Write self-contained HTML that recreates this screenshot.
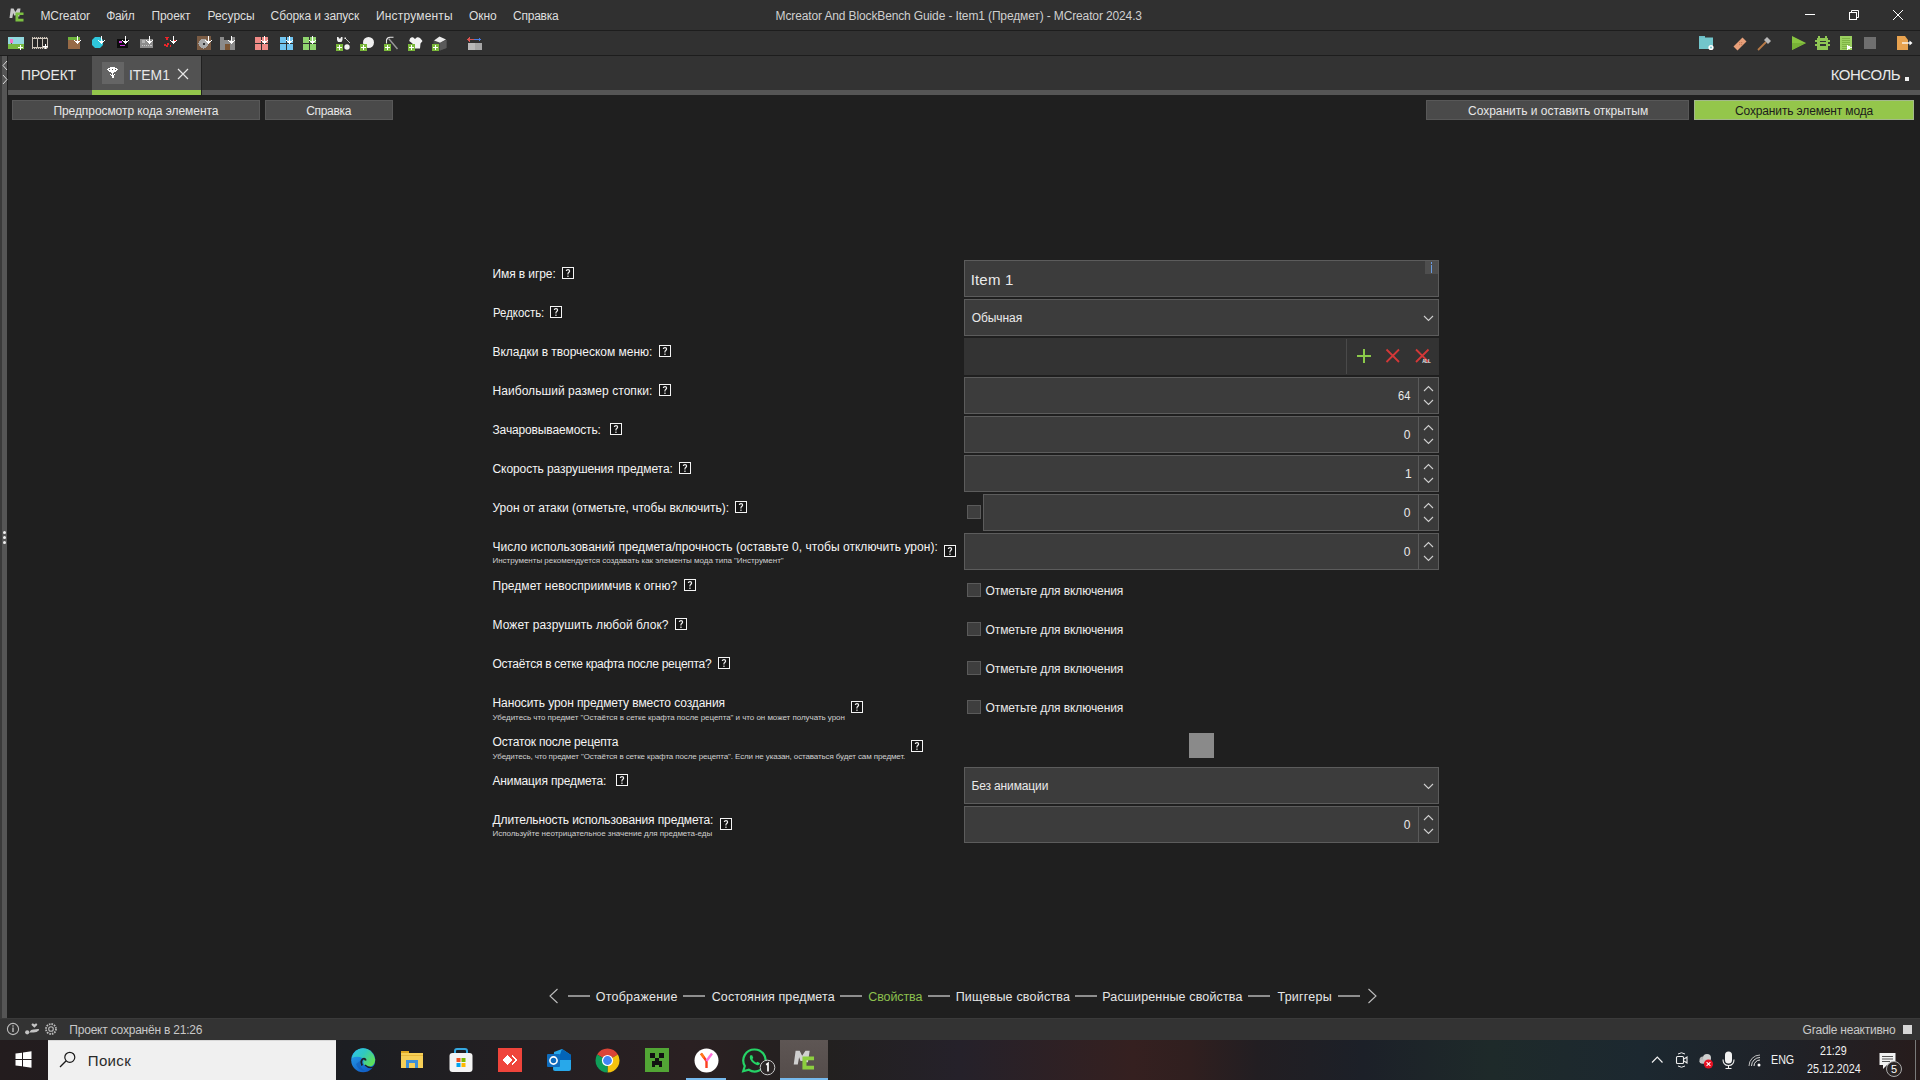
<!DOCTYPE html>
<html><head><meta charset="utf-8">
<style>
*{margin:0;padding:0;box-sizing:border-box}
html,body{width:1920px;height:1080px;overflow:hidden;background:#1f1f1f;font-family:"Liberation Sans",sans-serif}
.a{position:absolute}
.t{position:absolute;white-space:pre;font-family:"Liberation Sans",sans-serif}
.inp{position:absolute;left:964px;width:475px;height:37px;background:#3c3c3c;border:1px solid #5c5c5c}
.spb{position:absolute;left:1418px;width:21px;height:37px;border:1px solid #5c5c5c;border-left:1px solid #5a5a5a;background:#3a3a3a}
.help{position:absolute;width:12px;height:12px;border:1px solid #f2f2f2;background:#1a1a1a}
.help:after{content:"";position:absolute}
.cb{position:absolute;left:967px;width:14px;height:14px;background:#3e3e3e;border:1px solid #5a5a5a}
.btn{position:absolute;top:100px;height:20px;background:#4a4a4a;border:1px solid #585858}
svg{position:absolute;overflow:visible}
</style></head><body>
<!-- title bar -->
<div class="a" style="left:0;top:0;width:1920px;height:30px;background:#303030"></div>
<div class="a" style="left:0;top:30px;width:1920px;height:1px;background:#1d1d1d"></div>
<!-- toolbar -->
<div class="a" style="left:0;top:31px;width:1920px;height:24px;background:#313131"></div>
<div class="a" style="left:0;top:55px;width:1920px;height:1px;background:#1d1d1d"></div>
<!-- tab row -->
<div class="a" style="left:0;top:56px;width:1920px;height:34px;background:#333333"></div>
<div class="a" style="left:8px;top:90px;width:1912px;height:5px;background:#555555"></div>
<div class="a" style="left:92px;top:56px;width:109px;height:34px;background:#525252"></div>
<div class="a" style="left:92px;top:90px;width:109px;height:5px;background:#93c54b"></div>
<div class="a" style="left:102px;top:62px;width:22px;height:22px;background:#656565"></div>
<div class="a" style="left:201px;top:56px;width:1px;height:39px;background:#202020"></div>
<!-- left strip -->
<div class="a" style="left:0;top:56px;width:2px;height:962px;background:#3a3a3a"></div>
<div class="a" style="left:2px;top:56px;width:5px;height:962px;background:#555555"></div>
<div class="a" style="left:7px;top:56px;width:1px;height:962px;background:#1f1f1f"></div>
<!-- status bar -->
<div class="a" style="left:0;top:1018px;width:1920px;height:22px;background:#333333;border-top:1px solid #3a3a3a"></div>
<!-- taskbar -->
<div class="a" style="left:0;top:1040px;width:1920px;height:40px;background:linear-gradient(90deg,#231c1e 0%,#1f1c20 15%,#1c1e22 18%,#2a2022 36%,#22201f 43%,#25212a 50%,#352020 59%,#301f1f 62%,#221e22 65.5%,#1c2028 71%,#1e2a2a 77.7%,#1c2830 85.5%,#1f2228 92.7%,#271c1c 100%)"></div>
<div class="a" style="left:48px;top:1040px;width:288px;height:40px;background:#f0f0f0;border-top:1px solid #d8d8d8"></div>
<div class="a" style="left:780px;top:1040px;width:48px;height:40px;background:linear-gradient(180deg,#5e5654,#544c4a)"></div>
<div class="a" style="left:686px;top:1078px;width:40px;height:2px;background:#76b9ed"></div>
<div class="a" style="left:780px;top:1078px;width:48px;height:2px;background:#76b9ed"></div>
<div class="a" style="left:1915px;top:1040px;width:1px;height:40px;background:#7a7a7a"></div>

<!-- buttons -->
<div class="btn" style="left:12px;width:248px"></div>
<div class="btn" style="left:265px;width:128px"></div>
<div class="btn" style="left:1426px;width:263px"></div>
<div class="btn" style="left:1694px;width:220px;background:#94c64b;border-color:#a3b98a"></div>

<!-- form boxes -->
<div class="inp" style="top:260px"></div>
<div class="a" style="left:1425px;top:261px;width:13px;height:13px;background:#4e4e4e"></div>
<div class="a" style="left:1431px;top:262px;width:1px;height:2px;background:#6a9ce0"></div><div class="a" style="left:1431px;top:265px;width:1px;height:8px;background:#6a9ce0"></div>
<div class="inp" style="top:299px"></div>
<div class="a" style="left:964px;top:338px;width:475px;height:37px;background:#333333"></div>
<div class="a" style="left:1346px;top:339px;width:1px;height:35px;background:#4a4a4a"></div>
<div class="inp" style="top:377px;width:455px"></div><div class="spb" style="top:377px"></div>
<div class="inp" style="top:416px;width:455px"></div><div class="spb" style="top:416px"></div>
<div class="inp" style="top:455px;width:455px"></div><div class="spb" style="top:455px"></div>
<div class="cb" style="top:505px"></div>
<div class="inp" style="top:494px;left:983px;width:436px"></div><div class="spb" style="top:494px"></div>
<div class="inp" style="top:533px;width:455px"></div><div class="spb" style="top:533px"></div>
<div class="cb" style="top:583px"></div>
<div class="cb" style="top:622px"></div>
<div class="cb" style="top:661px"></div>
<div class="cb" style="top:700px"></div>
<div class="a" style="left:1189px;top:733px;width:25px;height:25px;background:#8a8a8a"></div>
<div class="inp" style="top:767px"></div>
<div class="inp" style="top:806px;width:455px"></div><div class="spb" style="top:806px"></div>

<svg style="left:9px;top:8px" width="16" height="15" viewBox="0 0 16 15" ><g transform="scale(1.0)"><path d="M0.5 10 L1.8 0.5 L4.6 0.5 L6.3 4 L8.6 0.5 L11.5 0.5 L10.3 8.5 L7.8 8.5 L8.3 5 L6.6 7.5 L5.2 7.5 L4.2 5 L3.3 10 Z" fill="#c9c9c9"/><path d="M6.5 4.5 L14.5 4.5 L14.5 7 L9.3 7 L9.3 10.8 L14.5 10.8 L14.5 13.5 L6.5 13.5 Z" fill="#7cc142"/></g></svg>
<svg style="left:8px;top:37px" width="17" height="14" viewBox="0 0 17 14" shape-rendering="crispEdges"><rect x="0" y="0" width="16" height="7" fill="#92d8de"/><rect x="0" y="7" width="16" height="5" fill="#76b83e"/><rect x="2" y="2" width="3" height="4" fill="#f07ac8"/><rect x="3" y="6" width="1" height="1" fill="#6a4a3a"/><rect x="10" y="10" width="5" height="1" fill="#fff"/><rect x="12" y="8" width="1" height="5" fill="#fff"/></svg>
<svg style="left:32px;top:37px" width="17" height="14" viewBox="0 0 17 14" shape-rendering="crispEdges"><rect x="0" y="0" width="16" height="12" fill="#cbc3b8"/><rect x="1" y="2" width="4" height="8" fill="#262626"/><rect x="6" y="2" width="4" height="8" fill="#262626"/><rect x="11" y="2" width="4" height="8" fill="#262626"/><rect x="1" y="0" width="1" height="1" fill="#444"/><rect x="1" y="11" width="1" height="1" fill="#444"/><rect x="3" y="0" width="1" height="1" fill="#444"/><rect x="3" y="11" width="1" height="1" fill="#444"/><rect x="5" y="0" width="1" height="1" fill="#444"/><rect x="5" y="11" width="1" height="1" fill="#444"/><rect x="7" y="0" width="1" height="1" fill="#444"/><rect x="7" y="11" width="1" height="1" fill="#444"/><rect x="9" y="0" width="1" height="1" fill="#444"/><rect x="9" y="11" width="1" height="1" fill="#444"/><rect x="11" y="0" width="1" height="1" fill="#444"/><rect x="11" y="11" width="1" height="1" fill="#444"/><rect x="13" y="0" width="1" height="1" fill="#444"/><rect x="13" y="11" width="1" height="1" fill="#444"/><rect x="15" y="0" width="1" height="1" fill="#444"/><rect x="15" y="11" width="1" height="1" fill="#444"/><rect x="11" y="9" width="5" height="1" fill="#fff"/><rect x="13" y="7" width="1" height="5" fill="#fff"/></svg>
<svg style="left:68px;top:36px" width="13" height="14" viewBox="0 0 13 14" shape-rendering="crispEdges"><rect x="0" y="1" width="12" height="3" fill="#6db33c"/><rect x="0" y="4" width="12" height="9" fill="#976a46"/><g shape-rendering="crispEdges"><rect x="9" y="0" width="1" height="6" fill="#fff"/><rect x="7" y="5" width="5" height="1" fill="#fff"/><rect x="8" y="6" width="3" height="1" fill="#fff"/><rect x="9" y="7" width="1" height="1" fill="#fff"/><rect x="6" y="4" width="1" height="1" fill="#fff"/><rect x="12" y="4" width="1" height="1" fill="#fff"/></g></svg>
<svg style="left:92px;top:36px" width="13" height="14" viewBox="0 0 13 14" ><path d="M3 1 L8 1 L11 4 L11 9 L8 12 L3 12 L0 9 L0 4 Z" fill="#2fc7dc"/><g shape-rendering="crispEdges"><rect x="9" y="0" width="1" height="6" fill="#fff"/><rect x="7" y="5" width="5" height="1" fill="#fff"/><rect x="8" y="6" width="3" height="1" fill="#fff"/><rect x="9" y="7" width="1" height="1" fill="#fff"/><rect x="6" y="4" width="1" height="1" fill="#fff"/><rect x="12" y="4" width="1" height="1" fill="#fff"/></g></svg>
<svg style="left:117px;top:36px" width="12" height="14" viewBox="0 0 12 14" shape-rendering="crispEdges"><rect x="0" y="2.5" width="10.5" height="9" fill="#0d0d0d"/><rect x="2" y="5" width="3" height="1.5" fill="#c93ad8"/><rect x="3" y="8.5" width="5" height="1.5" fill="#c93ad8"/><g shape-rendering="crispEdges"><rect x="8" y="0" width="1" height="6" fill="#fff"/><rect x="6" y="5" width="5" height="1" fill="#fff"/><rect x="7" y="6" width="3" height="1" fill="#fff"/><rect x="8" y="7" width="1" height="1" fill="#fff"/><rect x="5" y="4" width="1" height="1" fill="#fff"/><rect x="11" y="4" width="1" height="1" fill="#fff"/></g></svg>
<svg style="left:140px;top:36px" width="13" height="14" viewBox="0 0 13 14" shape-rendering="crispEdges"><rect x="0" y="2.5" width="12.5" height="9.5" fill="#8c8c8c"/><rect x="2" y="4" width="3" height="3" fill="#b5b5b5"/><rect x="1.5" y="8.5" width="1.2" height="1.2" fill="#c8c8c8"/><rect x="3.7" y="8.5" width="1.2" height="1.2" fill="#c8c8c8"/><rect x="5.9" y="8.5" width="1.2" height="1.2" fill="#c8c8c8"/><rect x="8.100000000000001" y="8.5" width="1.2" height="1.2" fill="#c8c8c8"/><rect x="10.3" y="8.5" width="1.2" height="1.2" fill="#c8c8c8"/><g shape-rendering="crispEdges"><rect x="9" y="0" width="1" height="6" fill="#fff"/><rect x="7" y="5" width="5" height="1" fill="#fff"/><rect x="8" y="6" width="3" height="1" fill="#fff"/><rect x="9" y="7" width="1" height="1" fill="#fff"/><rect x="6" y="4" width="1" height="1" fill="#fff"/><rect x="12" y="4" width="1" height="1" fill="#fff"/></g></svg>
<svg style="left:163px;top:36px" width="15" height="14" viewBox="0 0 15 14" shape-rendering="crispEdges"><rect x="3" y="2" width="1.5" height="1.5" fill="#e8262a"/><rect x="2" y="1" width="3.5" height="0.5" fill="#e8262a"/><rect x="1" y="8" width="2" height="2" fill="#e8262a"/><rect x="3" y="9" width="2" height="2" fill="#e8262a"/><rect x="4" y="7" width="1.5" height="1.5" fill="#e8262a"/><rect x="6.5" y="9" width="1.5" height="1.5" fill="#e8262a"/><rect x="11" y="4" width="2" height="2" fill="#e8262a"/><g shape-rendering="crispEdges"><rect x="10" y="0" width="1" height="6" fill="#fff"/><rect x="8" y="5" width="5" height="1" fill="#fff"/><rect x="9" y="6" width="3" height="1" fill="#fff"/><rect x="10" y="7" width="1" height="1" fill="#fff"/><rect x="7" y="4" width="1" height="1" fill="#fff"/><rect x="13" y="4" width="1" height="1" fill="#fff"/></g></svg>
<svg style="left:197px;top:36px" width="15" height="15" viewBox="0 0 15 15" shape-rendering="crispEdges"><rect x="0" y="0" width="14" height="14" fill="#7a5b43"/><circle cx="6.5" cy="7.5" r="5" fill="#a9a9a9"/><rect x="6" y="7" width="1.5" height="1.5" fill="#333"/><g shape-rendering="crispEdges"><rect x="11" y="0" width="1" height="6" fill="#fff"/><rect x="9" y="5" width="5" height="1" fill="#fff"/><rect x="10" y="6" width="3" height="1" fill="#fff"/><rect x="11" y="7" width="1" height="1" fill="#fff"/><rect x="8" y="4" width="1" height="1" fill="#fff"/><rect x="14" y="4" width="1" height="1" fill="#fff"/></g></svg>
<svg style="left:220px;top:36px" width="16" height="15" viewBox="0 0 16 15" shape-rendering="crispEdges"><rect x="0" y="0.5" width="3.5" height="13.5" fill="#8a8a8a"/><rect x="11" y="0.5" width="3.5" height="13.5" fill="#8a8a8a"/><rect x="3.5" y="4" width="7.5" height="10" fill="#8a8a8a"/><rect x="5" y="8" width="4.5" height="6" fill="#7a5534"/><g shape-rendering="crispEdges"><rect x="11" y="0" width="1" height="6" fill="#fff"/><rect x="9" y="5" width="5" height="1" fill="#fff"/><rect x="10" y="6" width="3" height="1" fill="#fff"/><rect x="11" y="7" width="1" height="1" fill="#fff"/><rect x="8" y="4" width="1" height="1" fill="#fff"/><rect x="14" y="4" width="1" height="1" fill="#fff"/></g></svg>
<svg style="left:255px;top:37px" width="15" height="14" viewBox="0 0 15 14" shape-rendering="crispEdges"><rect x="0" y="0" width="6" height="6" fill="#f08a86"/><rect x="7" y="0" width="6" height="6" fill="#f08a86"/><rect x="0" y="7" width="6" height="6" fill="#f08a86"/><rect x="7" y="7" width="6" height="6" fill="#f08a86"/><g shape-rendering="crispEdges"><rect x="9" y="-1" width="1" height="6" fill="#fff"/><rect x="7" y="4" width="5" height="1" fill="#fff"/><rect x="8" y="5" width="3" height="1" fill="#fff"/><rect x="9" y="6" width="1" height="1" fill="#fff"/><rect x="6" y="3" width="1" height="1" fill="#fff"/><rect x="12" y="3" width="1" height="1" fill="#fff"/></g></svg>
<svg style="left:280px;top:37px" width="15" height="14" viewBox="0 0 15 14" shape-rendering="crispEdges"><rect x="0" y="0" width="6" height="6" fill="#72c6f2"/><rect x="7" y="0" width="6" height="6" fill="#72c6f2"/><rect x="0" y="7" width="6" height="6" fill="#72c6f2"/><rect x="7" y="7" width="6" height="6" fill="#72c6f2"/><g shape-rendering="crispEdges"><rect x="9" y="-1" width="1" height="6" fill="#fff"/><rect x="7" y="4" width="5" height="1" fill="#fff"/><rect x="8" y="5" width="3" height="1" fill="#fff"/><rect x="9" y="6" width="1" height="1" fill="#fff"/><rect x="6" y="3" width="1" height="1" fill="#fff"/><rect x="12" y="3" width="1" height="1" fill="#fff"/></g></svg>
<svg style="left:303px;top:37px" width="15" height="14" viewBox="0 0 15 14" shape-rendering="crispEdges"><rect x="0" y="0" width="6" height="6" fill="#8fd46e"/><rect x="7" y="0" width="6" height="6" fill="#8fd46e"/><rect x="0" y="7" width="6" height="6" fill="#8fd46e"/><rect x="7" y="7" width="6" height="6" fill="#8fd46e"/><g shape-rendering="crispEdges"><rect x="9" y="-1" width="1" height="6" fill="#fff"/><rect x="7" y="4" width="5" height="1" fill="#fff"/><rect x="8" y="5" width="3" height="1" fill="#fff"/><rect x="9" y="6" width="1" height="1" fill="#fff"/><rect x="6" y="3" width="1" height="1" fill="#fff"/><rect x="12" y="3" width="1" height="1" fill="#fff"/></g></svg>
<svg style="left:336px;top:36px" width="15" height="15" viewBox="0 0 15 15" ><path d="M1 1 L2.5 1 L3 2.5 L4.5 2.5 L5 1 L6.5 1 L6.5 4 L5.5 6 L2 6 L1 4 Z" fill="#eee"/><path d="M9 2 L14 7" stroke="#bbb" stroke-width="1"/><rect x="8.5" y="1.5" width="1.5" height="1.5" fill="#eee"/><circle cx="11" cy="11" r="2.7" fill="#f2f2f2"/><g shape-rendering="crispEdges"><rect x="0" y="8" width="7" height="7" fill="#7ab83a"/><rect x="1" y="11" width="5" height="1" fill="#fff"/><rect x="3" y="9" width="1" height="5" fill="#fff"/></g></svg>
<svg style="left:360px;top:36px" width="15" height="15" viewBox="0 0 15 15" ><circle cx="8.5" cy="6.5" r="5.5" fill="#f0f0f0"/><g shape-rendering="crispEdges"><rect x="0" y="8" width="7" height="7" fill="#7ab83a"/><rect x="1" y="11" width="5" height="1" fill="#fff"/><rect x="3" y="9" width="1" height="5" fill="#fff"/></g></svg>
<svg style="left:384px;top:36px" width="16" height="15" viewBox="0 0 16 15" ><path d="M2.5 7.5 L2.5 4 Q3.2 1.3 6 1.2 L9.5 1.2" stroke="#e8e8e8" stroke-width="1.1" fill="none"/><path d="M4.8 2.8 L13.5 13" stroke="#9a9a9a" stroke-width="1.4"/><g shape-rendering="crispEdges"><rect x="0" y="8" width="7" height="7" fill="#7ab83a"/><rect x="1" y="11" width="5" height="1" fill="#fff"/><rect x="3" y="9" width="1" height="5" fill="#fff"/></g></svg>
<svg style="left:407px;top:36px" width="17" height="15" viewBox="0 0 17 15" ><path d="M3 2.5 Q4 1 6 1.2 L8 3 L10 1.2 Q12 1 13.5 2.5 L15.5 5 L13.5 7.5 L13 12.5 L6 12.5 L5.5 7.5 L2.2 5 Z" fill="#f2f2f2"/><g shape-rendering="crispEdges"><rect x="1" y="8" width="7" height="7" fill="#7ab83a"/><rect x="2" y="11" width="5" height="1" fill="#fff"/><rect x="4" y="9" width="1" height="5" fill="#fff"/></g></svg>
<svg style="left:432px;top:36px" width="16" height="15" viewBox="0 0 16 15" ><path d="M1.5 4.5 L8 7 L14.5 4 L14.5 12 L8 14.5 L1.5 11.5 Z" fill="#4a4a4a"/><path d="M8 7 L14.5 4 L14.5 12 L8 14.5 Z" fill="#5a5a5a"/><path d="M2 4.5 L7.5 0.5 L14 3.5 L8 6.8 Z" fill="#ececec"/><g shape-rendering="crispEdges"><rect x="0" y="8" width="7" height="7" fill="#7ab83a"/><rect x="1" y="11" width="5" height="1" fill="#fff"/><rect x="3" y="9" width="1" height="5" fill="#fff"/></g></svg>
<svg style="left:467px;top:36px" width="15" height="15" viewBox="0 0 15 15" shape-rendering="crispEdges"><path d="M1 3.5 L7 3.5" stroke="#d9534f" stroke-width="1.4"/><path d="M0 3.5 L3 1 L3 6 Z" fill="#d9534f"/><path d="M7 3.5 L13 3.5" stroke="#4a7ce0" stroke-width="1.4"/><path d="M14.5 3.5 L11.5 1 L11.5 6 Z" fill="#4a7ce0"/><rect x="0.5" y="7" width="14" height="7" fill="#b9b9b9"/><rect x="7.5" y="7" width="7" height="7" fill="#a6a6a6"/></svg>
<svg style="left:1699px;top:36px" width="17" height="15" viewBox="0 0 17 15" ><rect x="0" y="0" width="6" height="2" fill="#6cbcc4"/><rect x="0" y="1.5" width="14" height="11.5" fill="#72c6cc"/><circle cx="12" cy="11.5" r="2.6" fill="#fff"/><circle cx="12" cy="11.5" r="1" fill="#72c6cc"/></svg>
<svg style="left:1733px;top:36px" width="15" height="15" viewBox="0 0 15 15" ><path d="M0.5 10.5 L9.5 1.5 L13.5 5.5 L4.5 14.5 Z" fill="#e8a07a"/><rect x="6" y="6" width="1.2" height="1.2" fill="#c87d5a"/><rect x="8" y="6" width="1.2" height="1.2" fill="#c87d5a"/><rect x="6" y="8" width="1.2" height="1.2" fill="#c87d5a"/><rect x="8" y="8" width="1.2" height="1.2" fill="#c87d5a"/></svg>
<svg style="left:1757px;top:36px" width="15" height="15" viewBox="0 0 15 15" ><path d="M1 14 L9 6" stroke="#b87a48" stroke-width="1.8"/><path d="M7 4 L10 1 L14 5 L11 8 Z" fill="#b9b9b9"/></svg>
<svg style="left:1792px;top:36px" width="15" height="15" viewBox="0 0 15 15" ><path d="M0 0 L14 7 L0 14 Z" fill="#88c441"/><path d="M0 7 L14 7 L0 14 Z" fill="#78b236"/></svg>
<svg style="left:1815px;top:36px" width="15" height="15" viewBox="0 0 15 15" shape-rendering="crispEdges"><rect x="3" y="0" width="1.5" height="2" fill="#8fc654"/><rect x="10" y="0" width="1.5" height="2" fill="#8fc654"/><rect x="2" y="1.5" width="11" height="12" fill="#8fc654"/><rect x="0" y="4" width="15" height="1.5" fill="#8fc654"/><rect x="0" y="8" width="15" height="1.5" fill="#8fc654"/><rect x="4.5" y="4.5" width="6" height="1.5" fill="#333"/><rect x="4.5" y="8.2" width="6" height="1.5" fill="#333"/></svg>
<svg style="left:1840px;top:36px" width="14" height="15" viewBox="0 0 14 15" shape-rendering="crispEdges"><rect x="0" y="0" width="11.5" height="14" fill="#9bd060"/><rect x="1.5" y="2" width="8" height="0.8" fill="#7fb446"/><rect x="1.5" y="4" width="8" height="0.8" fill="#7fb446"/><rect x="1.5" y="6" width="8" height="0.8" fill="#7fb446"/><rect x="1.5" y="8" width="8" height="0.8" fill="#7fb446"/><rect x="1.5" y="10" width="8" height="0.8" fill="#7fb446"/><rect x="1.5" y="12" width="8" height="0.8" fill="#7fb446"/><path d="M7 9 L12 11.5 L7 14 Z" fill="#fff"/></svg>
<svg style="left:1864px;top:37px" width="13" height="13" viewBox="0 0 13 13" shape-rendering="crispEdges"><rect x="0" y="0" width="12" height="12" fill="#6f6f6f"/></svg>
<svg style="left:1897px;top:36px" width="17" height="15" viewBox="0 0 17 15" ><path d="M0 0 L8 0 L11 4 L11 14 L0 14 Z" fill="#e8a24f"/><path d="M5 7 L14 7" stroke="#fff" stroke-width="1.3"/><path d="M15.5 7 L12.5 4.5 L12.5 9.5 Z" fill="#fff"/></svg>
<svg style="left:1804px;top:9px" width="100" height="13" viewBox="0 0 100 13" ><rect x="1" y="5" width="10" height="1" fill="#fff"/><rect x="45.5" y="3.5" width="7" height="7" fill="none" stroke="#fff" stroke-width="1"/><path d="M47.5 3.5 L47.5 1.5 L54.5 1.5 L54.5 8.5 L52.5 8.5" stroke="#fff" stroke-width="1" fill="none"/><path d="M89 1 L99 11 M99 1 L89 11" stroke="#fff" stroke-width="1"/></svg>
<svg style="left:2px;top:60px" width="6" height="26" viewBox="0 0 6 26" ><path d="M5 1 L1 5.5 L5 10" stroke="#dcdcdc" stroke-width="1" fill="none"/><path d="M1 15 L5 19.5 L1 24" stroke="#dcdcdc" stroke-width="1" fill="none"/></svg>
<svg style="left:2px;top:530px" width="6" height="15" viewBox="0 0 6 15" ><circle cx="2.5" cy="2.4" r="1.5" fill="#eee"/><circle cx="2.5" cy="7.4" r="1.5" fill="#eee"/><circle cx="2.5" cy="12.4" r="1.5" fill="#eee"/></svg>
<svg style="left:106px;top:66px" width="14" height="13" viewBox="0 0 14 13" shape-rendering="crispEdges"><rect x="4" y="1" width="5" height="1" fill="#fff"/><rect x="2" y="2" width="9" height="1" fill="#fff"/><rect x="1" y="3" width="11" height="1" fill="#fff"/><rect x="2" y="4" width="9" height="1" fill="#fff"/><rect x="3" y="5" width="7" height="1" fill="#fff"/><rect x="5" y="6" width="3" height="1" fill="#fff"/><rect x="6" y="6.5" width="1" height="2.5" fill="#fff"/><rect x="4" y="8" width="1" height="1" fill="#fff"/><rect x="8" y="8" width="1" height="1" fill="#fff"/><rect x="5" y="9" width="3" height="1" fill="#fff"/><rect x="6" y="10" width="1.5" height="2" fill="#fff"/><rect x="3" y="3" width="1" height="1" fill="#555"/><rect x="6" y="3" width="1" height="1" fill="#555"/><rect x="9" y="3" width="1" height="1" fill="#555"/></svg>
<svg style="left:177px;top:68px" width="12" height="12" viewBox="0 0 12 12" ><path d="M1 1 L11 11 M11 1 L1 11" stroke="#e6e6e6" stroke-width="1.2"/></svg>
<svg style="left:1905px;top:77px" width="5" height="5" viewBox="0 0 5 5" shape-rendering="crispEdges"><rect x="0" y="0" width="4" height="4" fill="#f0f0f0"/></svg>
<svg style="left:562px;top:267px" width="12" height="12" viewBox="0 0 12 12" ><rect x="0.5" y="0.5" width="11" height="11" fill="#141414" stroke="#f4f4f4" stroke-width="1"/><path d="M4.3 4 Q4.5 2.6 6 2.6 Q7.6 2.6 7.6 4 Q7.6 5 6.6 5.6 Q5.9 6.1 5.9 7.6" stroke="#f0f0f0" stroke-width="1.2" fill="none"/><rect x="5.3" y="8.6" width="1.3" height="1.3" fill="#f0f0f0"/></svg>
<svg style="left:550px;top:306px" width="12" height="12" viewBox="0 0 12 12" ><rect x="0.5" y="0.5" width="11" height="11" fill="#141414" stroke="#f4f4f4" stroke-width="1"/><path d="M4.3 4 Q4.5 2.6 6 2.6 Q7.6 2.6 7.6 4 Q7.6 5 6.6 5.6 Q5.9 6.1 5.9 7.6" stroke="#f0f0f0" stroke-width="1.2" fill="none"/><rect x="5.3" y="8.6" width="1.3" height="1.3" fill="#f0f0f0"/></svg>
<svg style="left:659px;top:345px" width="12" height="12" viewBox="0 0 12 12" ><rect x="0.5" y="0.5" width="11" height="11" fill="#141414" stroke="#f4f4f4" stroke-width="1"/><path d="M4.3 4 Q4.5 2.6 6 2.6 Q7.6 2.6 7.6 4 Q7.6 5 6.6 5.6 Q5.9 6.1 5.9 7.6" stroke="#f0f0f0" stroke-width="1.2" fill="none"/><rect x="5.3" y="8.6" width="1.3" height="1.3" fill="#f0f0f0"/></svg>
<svg style="left:659px;top:384px" width="12" height="12" viewBox="0 0 12 12" ><rect x="0.5" y="0.5" width="11" height="11" fill="#141414" stroke="#f4f4f4" stroke-width="1"/><path d="M4.3 4 Q4.5 2.6 6 2.6 Q7.6 2.6 7.6 4 Q7.6 5 6.6 5.6 Q5.9 6.1 5.9 7.6" stroke="#f0f0f0" stroke-width="1.2" fill="none"/><rect x="5.3" y="8.6" width="1.3" height="1.3" fill="#f0f0f0"/></svg>
<svg style="left:610px;top:423px" width="12" height="12" viewBox="0 0 12 12" ><rect x="0.5" y="0.5" width="11" height="11" fill="#141414" stroke="#f4f4f4" stroke-width="1"/><path d="M4.3 4 Q4.5 2.6 6 2.6 Q7.6 2.6 7.6 4 Q7.6 5 6.6 5.6 Q5.9 6.1 5.9 7.6" stroke="#f0f0f0" stroke-width="1.2" fill="none"/><rect x="5.3" y="8.6" width="1.3" height="1.3" fill="#f0f0f0"/></svg>
<svg style="left:679px;top:462px" width="12" height="12" viewBox="0 0 12 12" ><rect x="0.5" y="0.5" width="11" height="11" fill="#141414" stroke="#f4f4f4" stroke-width="1"/><path d="M4.3 4 Q4.5 2.6 6 2.6 Q7.6 2.6 7.6 4 Q7.6 5 6.6 5.6 Q5.9 6.1 5.9 7.6" stroke="#f0f0f0" stroke-width="1.2" fill="none"/><rect x="5.3" y="8.6" width="1.3" height="1.3" fill="#f0f0f0"/></svg>
<svg style="left:735px;top:501px" width="12" height="12" viewBox="0 0 12 12" ><rect x="0.5" y="0.5" width="11" height="11" fill="#141414" stroke="#f4f4f4" stroke-width="1"/><path d="M4.3 4 Q4.5 2.6 6 2.6 Q7.6 2.6 7.6 4 Q7.6 5 6.6 5.6 Q5.9 6.1 5.9 7.6" stroke="#f0f0f0" stroke-width="1.2" fill="none"/><rect x="5.3" y="8.6" width="1.3" height="1.3" fill="#f0f0f0"/></svg>
<svg style="left:944px;top:545px" width="12" height="12" viewBox="0 0 12 12" ><rect x="0.5" y="0.5" width="11" height="11" fill="#141414" stroke="#f4f4f4" stroke-width="1"/><path d="M4.3 4 Q4.5 2.6 6 2.6 Q7.6 2.6 7.6 4 Q7.6 5 6.6 5.6 Q5.9 6.1 5.9 7.6" stroke="#f0f0f0" stroke-width="1.2" fill="none"/><rect x="5.3" y="8.6" width="1.3" height="1.3" fill="#f0f0f0"/></svg>
<svg style="left:684px;top:579px" width="12" height="12" viewBox="0 0 12 12" ><rect x="0.5" y="0.5" width="11" height="11" fill="#141414" stroke="#f4f4f4" stroke-width="1"/><path d="M4.3 4 Q4.5 2.6 6 2.6 Q7.6 2.6 7.6 4 Q7.6 5 6.6 5.6 Q5.9 6.1 5.9 7.6" stroke="#f0f0f0" stroke-width="1.2" fill="none"/><rect x="5.3" y="8.6" width="1.3" height="1.3" fill="#f0f0f0"/></svg>
<svg style="left:675px;top:618px" width="12" height="12" viewBox="0 0 12 12" ><rect x="0.5" y="0.5" width="11" height="11" fill="#141414" stroke="#f4f4f4" stroke-width="1"/><path d="M4.3 4 Q4.5 2.6 6 2.6 Q7.6 2.6 7.6 4 Q7.6 5 6.6 5.6 Q5.9 6.1 5.9 7.6" stroke="#f0f0f0" stroke-width="1.2" fill="none"/><rect x="5.3" y="8.6" width="1.3" height="1.3" fill="#f0f0f0"/></svg>
<svg style="left:718px;top:657px" width="12" height="12" viewBox="0 0 12 12" ><rect x="0.5" y="0.5" width="11" height="11" fill="#141414" stroke="#f4f4f4" stroke-width="1"/><path d="M4.3 4 Q4.5 2.6 6 2.6 Q7.6 2.6 7.6 4 Q7.6 5 6.6 5.6 Q5.9 6.1 5.9 7.6" stroke="#f0f0f0" stroke-width="1.2" fill="none"/><rect x="5.3" y="8.6" width="1.3" height="1.3" fill="#f0f0f0"/></svg>
<svg style="left:851px;top:701px" width="12" height="12" viewBox="0 0 12 12" ><rect x="0.5" y="0.5" width="11" height="11" fill="#141414" stroke="#f4f4f4" stroke-width="1"/><path d="M4.3 4 Q4.5 2.6 6 2.6 Q7.6 2.6 7.6 4 Q7.6 5 6.6 5.6 Q5.9 6.1 5.9 7.6" stroke="#f0f0f0" stroke-width="1.2" fill="none"/><rect x="5.3" y="8.6" width="1.3" height="1.3" fill="#f0f0f0"/></svg>
<svg style="left:911px;top:740px" width="12" height="12" viewBox="0 0 12 12" ><rect x="0.5" y="0.5" width="11" height="11" fill="#141414" stroke="#f4f4f4" stroke-width="1"/><path d="M4.3 4 Q4.5 2.6 6 2.6 Q7.6 2.6 7.6 4 Q7.6 5 6.6 5.6 Q5.9 6.1 5.9 7.6" stroke="#f0f0f0" stroke-width="1.2" fill="none"/><rect x="5.3" y="8.6" width="1.3" height="1.3" fill="#f0f0f0"/></svg>
<svg style="left:616px;top:774px" width="12" height="12" viewBox="0 0 12 12" ><rect x="0.5" y="0.5" width="11" height="11" fill="#141414" stroke="#f4f4f4" stroke-width="1"/><path d="M4.3 4 Q4.5 2.6 6 2.6 Q7.6 2.6 7.6 4 Q7.6 5 6.6 5.6 Q5.9 6.1 5.9 7.6" stroke="#f0f0f0" stroke-width="1.2" fill="none"/><rect x="5.3" y="8.6" width="1.3" height="1.3" fill="#f0f0f0"/></svg>
<svg style="left:720px;top:818px" width="12" height="12" viewBox="0 0 12 12" ><rect x="0.5" y="0.5" width="11" height="11" fill="#141414" stroke="#f4f4f4" stroke-width="1"/><path d="M4.3 4 Q4.5 2.6 6 2.6 Q7.6 2.6 7.6 4 Q7.6 5 6.6 5.6 Q5.9 6.1 5.9 7.6" stroke="#f0f0f0" stroke-width="1.2" fill="none"/><rect x="5.3" y="8.6" width="1.3" height="1.3" fill="#f0f0f0"/></svg>
<svg style="left:1423px;top:315px" width="11" height="7" viewBox="0 0 11 7" ><path d="M1 1 L5.5 5.5 L10 1" stroke="#cfcfcf" stroke-width="1.1" fill="none"/></svg>
<svg style="left:1423px;top:783px" width="11" height="7" viewBox="0 0 11 7" ><path d="M1 1 L5.5 5.5 L10 1" stroke="#cfcfcf" stroke-width="1.1" fill="none"/></svg>
<svg style="left:1423px;top:385px" width="11" height="22" viewBox="0 0 11 22" ><path d="M1 6 L5.5 1.5 L10 6" stroke="#cfcfcf" stroke-width="1.1" fill="none"/><path d="M1 15 L5.5 19.5 L10 15" stroke="#cfcfcf" stroke-width="1.1" fill="none"/></svg>
<svg style="left:1423px;top:424px" width="11" height="22" viewBox="0 0 11 22" ><path d="M1 6 L5.5 1.5 L10 6" stroke="#cfcfcf" stroke-width="1.1" fill="none"/><path d="M1 15 L5.5 19.5 L10 15" stroke="#cfcfcf" stroke-width="1.1" fill="none"/></svg>
<svg style="left:1423px;top:463px" width="11" height="22" viewBox="0 0 11 22" ><path d="M1 6 L5.5 1.5 L10 6" stroke="#cfcfcf" stroke-width="1.1" fill="none"/><path d="M1 15 L5.5 19.5 L10 15" stroke="#cfcfcf" stroke-width="1.1" fill="none"/></svg>
<svg style="left:1423px;top:502px" width="11" height="22" viewBox="0 0 11 22" ><path d="M1 6 L5.5 1.5 L10 6" stroke="#cfcfcf" stroke-width="1.1" fill="none"/><path d="M1 15 L5.5 19.5 L10 15" stroke="#cfcfcf" stroke-width="1.1" fill="none"/></svg>
<svg style="left:1423px;top:541px" width="11" height="22" viewBox="0 0 11 22" ><path d="M1 6 L5.5 1.5 L10 6" stroke="#cfcfcf" stroke-width="1.1" fill="none"/><path d="M1 15 L5.5 19.5 L10 15" stroke="#cfcfcf" stroke-width="1.1" fill="none"/></svg>
<svg style="left:1423px;top:814px" width="11" height="22" viewBox="0 0 11 22" ><path d="M1 6 L5.5 1.5 L10 6" stroke="#cfcfcf" stroke-width="1.1" fill="none"/><path d="M1 15 L5.5 19.5 L10 15" stroke="#cfcfcf" stroke-width="1.1" fill="none"/></svg>
<svg style="left:1356px;top:348px" width="16" height="16" viewBox="0 0 16 16" shape-rendering="crispEdges"><rect x="0.5" y="6.5" width="14.5" height="2" fill="#8bc94a"/><rect x="6.8" y="0.5" width="2" height="14.5" fill="#8bc94a"/></svg>
<svg style="left:1385px;top:348px" width="16" height="16" viewBox="0 0 16 16" ><path d="M1.5 1.5 L14 14 M14 1.5 L1.5 14" stroke="#d43838" stroke-width="1.8"/></svg>
<svg style="left:1415px;top:348px" width="16" height="16" viewBox="0 0 16 16" ><path d="M1 1.5 L13.5 14 M13.5 1.5 L1 14" stroke="#d43838" stroke-width="1.8"/><text x="11.5" y="15" font-family="Liberation Sans" font-size="4.5" font-weight="bold" fill="#eee" text-anchor="middle">ALL</text></svg>
<svg style="left:548px;top:988px" width="12" height="17" viewBox="0 0 12 17" ><path d="M9.5 1 L2 8 L9.5 15" stroke="#bdbdbd" stroke-width="1.1" fill="none"/></svg>
<svg style="left:1367px;top:988px" width="12" height="17" viewBox="0 0 12 17" ><path d="M1.5 1 L9 8 L1.5 15" stroke="#bdbdbd" stroke-width="1.1" fill="none"/></svg>
<div class="a" style="left:568px;top:995px;width:22px;height:2px;background:#8e8e8e"></div>
<div class="a" style="left:683px;top:995px;width:22px;height:2px;background:#8e8e8e"></div>
<div class="a" style="left:840px;top:995px;width:22px;height:2px;background:#8e8e8e"></div>
<div class="a" style="left:928px;top:995px;width:22px;height:2px;background:#8e8e8e"></div>
<div class="a" style="left:1075px;top:995px;width:22px;height:2px;background:#8e8e8e"></div>
<div class="a" style="left:1248px;top:995px;width:22px;height:2px;background:#8e8e8e"></div>
<div class="a" style="left:1338px;top:995px;width:22px;height:2px;background:#8e8e8e"></div>
<svg style="left:6px;top:1022px" width="54" height="14" viewBox="0 0 54 14" ><circle cx="7" cy="7" r="5.6" stroke="#bcbcbc" stroke-width="1.1" fill="none"/><rect x="6.3" y="5.5" width="1.4" height="4.5" fill="#bcbcbc"/><rect x="6.3" y="3.3" width="1.4" height="1.3" fill="#bcbcbc"/><path d="M28.4 5.8 L25.8 3.3 Q25 2 26.3 1.5 Q27.6 1.2 28.4 2.5 Q29.2 1.2 30.5 1.5 Q31.8 2 31 3.3 Z" fill="#c4c4c4"/><circle cx="21.2" cy="10.3" r="2.1" fill="#c4c4c4"/><path d="M23.8 9.6 Q25 7.2 28 7.5 L32 7 Q33.6 7 33 8.2 Q31 10.4 27.5 10.4 L23.8 10.6 Z" fill="#c4c4c4"/><circle cx="45" cy="7" r="5" stroke="#bcbcbc" stroke-width="1.8" fill="none" stroke-dasharray="1.6 1"/><circle cx="45" cy="7" r="2.3" stroke="#bcbcbc" stroke-width="1.1" fill="none"/></svg>
<svg style="left:1903px;top:1025px" width="9" height="9" viewBox="0 0 9 9" shape-rendering="crispEdges"><rect x="0" y="0" width="8.5" height="8.5" fill="#d6d6d6"/></svg>
<svg style="left:15px;top:1051px" width="18" height="18" viewBox="0 0 18 18" ><path d="M0.5 2.6 L7 1.7 L7 8 L0.5 8 Z M8 1.5 L16.5 0.3 L16.5 8 L8 8 Z M0.5 9 L7 9 L7 15.3 L0.5 14.4 Z M8 9 L16.5 9 L16.5 16.7 L8 15.5 Z" fill="#fff"/></svg>
<svg style="left:59px;top:1051px" width="18" height="18" viewBox="0 0 18 18" ><circle cx="10.8" cy="6.3" r="5" stroke="#1a1a1a" stroke-width="1.2" fill="none"/><path d="M7.2 9.8 L1 16" stroke="#1a1a1a" stroke-width="1.3"/></svg>
<svg style="left:351px;top:1048px" width="25" height="25" viewBox="0 0 25 25" ><defs><linearGradient id="eb" x1="0" y1="0" x2="0.6" y2="1"><stop offset="0" stop-color="#2aa8f0"/><stop offset="1" stop-color="#1160c8"/></linearGradient><linearGradient id="eg2" x1="0" y1="0" x2="1" y2="0.6"><stop offset="0" stop-color="#2ec4ec"/><stop offset="0.5" stop-color="#30c8c0"/><stop offset="1" stop-color="#5ee05a"/></linearGradient></defs><circle cx="12.2" cy="12.2" r="12" fill="url(#eb)"/><path d="M0.8 10 Q3 1 12 0.3 Q21.5 0.5 24.2 11.5 Q24 17.5 19.5 18.5 Q15.5 19 13.5 17 Q11.5 14.5 12.5 12.5 Q13 11 11.5 10 Q6 7.5 0.8 10 Z" fill="url(#eg2)"/><path d="M11.2 17.5 Q9 13 11.8 11 Q14 10 14.8 12.5" stroke="#1e2126" stroke-width="1.8" fill="none"/><path d="M14 17 Q17 20 21 19.5 Q23 19 23.8 17.5" stroke="#1e2126" stroke-width="1.2" fill="none"/><path d="M9 13 Q8.5 20 14 23 Q7 22.5 5 16 Z" fill="#0f56b0" opacity="0.5"/></svg>
<svg style="left:401px;top:1050px" width="23" height="20" viewBox="0 0 23 20" shape-rendering="crispEdges"><rect x="0" y="1" width="8" height="3" fill="#e0a820"/><rect x="0" y="3" width="22" height="15" fill="#f6cf57"/><rect x="0" y="5" width="22" height="1" fill="#e8b83a"/><rect x="5" y="10" width="12" height="8" fill="#3d8fd8"/><rect x="8" y="13" width="6" height="5" fill="#f6cf57"/></svg>
<svg style="left:449px;top:1048px" width="24" height="25" viewBox="0 0 24 25" ><path d="M6 6 L6 3 Q6 1 8 1 L16 1 Q18 1 18 3 L18 6" stroke="#35a8e0" stroke-width="2" fill="none"/><rect x="0.5" y="5" width="23" height="19" rx="3" fill="#f4f4f4"/><rect x="7.5" y="10" width="4" height="4" fill="#f25022"/><rect x="12.5" y="10" width="4" height="4" fill="#7fba00"/><rect x="7.5" y="15" width="4" height="4" fill="#00a4ef"/><rect x="12.5" y="15" width="4" height="4" fill="#ffb900"/></svg>
<svg style="left:498px;top:1048px" width="25" height="25" viewBox="0 0 25 25" shape-rendering="crispEdges"><rect x="0" y="0" width="24" height="24" fill="#ef443b"/><path d="M4 12 L9 7 L14 12 L9 17 Z" fill="#fff"/><path d="M14 7 L19 12 L14 17 L13 16 L17 12 L13 8 Z" fill="#fff"/></svg>
<svg style="left:546px;top:1048px" width="26" height="25" viewBox="0 0 26 25" ><path d="M8 4 L16 1 L25 7 L25 21 Q25 23 23 23 L9 23 Q7 23 7 21 Z" fill="#28a8ea"/><path d="M16 1 L25 7 L25 12 L12 12 Z" fill="#0364b8"/><rect x="1" y="6" width="13" height="13" rx="1" fill="#0f6cbd"/><circle cx="7.5" cy="12.5" r="3.6" stroke="#fff" stroke-width="1.6" fill="none"/></svg>
<svg style="left:595px;top:1048px" width="25" height="25" viewBox="0 0 25 25" ><path d="M12.5 12.5 L2.11 6.5 A12 12 0 0 1 22.89 6.5 Z" fill="#db4437"/><path d="M12.5 12.5 L22.89 6.5 A12 12 0 0 1 12.5 24.5 Z" fill="#f4c20d"/><path d="M12.5 12.5 L12.5 24.5 A12 12 0 0 1 2.11 6.5 Z" fill="#0f9d58"/><circle cx="12.5" cy="12.5" r="5.6" fill="#fff"/><circle cx="12.5" cy="12.5" r="4.4" fill="#4285f4"/></svg>
<svg style="left:645px;top:1048px" width="25" height="25" viewBox="0 0 25 25" shape-rendering="crispEdges"><rect x="0" y="0" width="24" height="24" fill="#52a535"/><rect x="5" y="5" width="5" height="5" fill="#111"/><rect x="14" y="5" width="5" height="5" fill="#111"/><rect x="10" y="10" width="4" height="5" fill="#111"/><rect x="7" y="13" width="3" height="6" fill="#111"/><rect x="14" y="13" width="3" height="6" fill="#111"/><rect x="10" y="15" width="4" height="2" fill="#111"/></svg>
<svg style="left:694px;top:1048px" width="25" height="25" viewBox="0 0 25 25" ><circle cx="12.5" cy="12.5" r="12" fill="#fff"/><path d="M7 5.5 L12.5 13 L12.5 20" stroke="#fc3f1d" stroke-width="2.4" fill="none"/><path d="M18 5.5 L12.5 13" stroke="#ff6fd8" stroke-width="2.4"/><path d="M7 5.5 L10 9.5" stroke="#ff7a1a" stroke-width="2.4"/></svg>
<svg style="left:742px;top:1048px" width="35" height="30" viewBox="0 0 35 30" ><path d="M12.5 1.5 A11 11 0 1 1 6.8 21.8 L1.2 23.2 L2.8 18 A11 11 0 0 1 12.5 1.5 Z" stroke="#25d366" stroke-width="2.2" fill="none"/><path d="M8.3 7.2 Q7.2 8.5 8.2 11.3 Q10.3 15.6 14.8 17 Q17 17.6 17.8 16 L17.8 15 L15.3 13.7 L14.2 14.8 Q11.6 13.6 10.3 11 L11.3 9.9 L10.2 7.2 Z" fill="#25d366"/><circle cx="25.5" cy="19.5" r="7.3" fill="#2b2626" stroke="#c8c8c8" stroke-width="1"/><path d="M24.2 16.8 L26 15.5 L26 23.5" stroke="#fff" stroke-width="1.7" fill="none"/></svg>
<svg style="left:793px;top:1050px" width="22" height="20" viewBox="0 0 22 20" ><g transform="scale(1.45)"><path d="M0.5 10 L1.8 0.5 L4.6 0.5 L6.3 4 L8.6 0.5 L11.5 0.5 L10.3 8.5 L7.8 8.5 L8.3 5 L6.6 7.5 L5.2 7.5 L4.2 5 L3.3 10 Z" fill="#d0d0d0"/><path d="M6.5 4.5 L14.5 4.5 L14.5 7 L9.3 7 L9.3 10.8 L14.5 10.8 L14.5 13.5 L6.5 13.5 Z" fill="#8ccf3f"/></g></svg>
<svg style="left:1651px;top:1055px" width="13" height="9" viewBox="0 0 13 9" ><path d="M1 7.5 L6.3 2 L11.5 7.5" stroke="#f0f0f0" stroke-width="1.2" fill="none"/></svg>
<svg style="left:1675px;top:1051px" width="14" height="18" viewBox="0 0 14 18" ><path d="M3 3 Q6.5 0.5 10 3" stroke="#eee" stroke-width="1" fill="none"/><path d="M3 15 Q6.5 17.5 10 15" stroke="#eee" stroke-width="1" fill="none"/><rect x="1.5" y="5.5" width="7" height="7" rx="1" stroke="#eee" stroke-width="1.1" fill="none"/><path d="M9 8 L12 6 L12 12 L9 10" stroke="#eee" stroke-width="1.1" fill="none"/></svg>
<svg style="left:1697px;top:1053px" width="18" height="17" viewBox="0 0 18 17" ><circle cx="6" cy="7" r="3.5" fill="#b5b5b5"/><circle cx="10" cy="5" r="4" fill="#cfcfcf"/><rect x="2.5" y="6.5" width="11" height="4" rx="2" fill="#c5c5c5"/><circle cx="11.5" cy="11" r="4.6" fill="#e81123"/><path d="M9.6 9.1 L13.4 12.9 M13.4 9.1 L9.6 12.9" stroke="#fff" stroke-width="1.1"/></svg>
<svg style="left:1722px;top:1051px" width="13" height="19" viewBox="0 0 13 19" ><rect x="3" y="0.5" width="7" height="12" rx="3.5" fill="#f2f2f2"/><path d="M1 8.5 Q1 14.5 6.5 14.5 Q12 14.5 12 8.5" stroke="#f2f2f2" stroke-width="1.1" fill="none"/><path d="M6.5 14.5 L6.5 17.5 M3.5 17.5 L9.5 17.5" stroke="#f2f2f2" stroke-width="1.1"/></svg>
<svg style="left:1748px;top:1054px" width="14" height="14" viewBox="0 0 14 14" ><path d="M1 12 A11 11 0 0 1 12 1" stroke="#bdbdbd" stroke-width="1" fill="none"/><path d="M3.5 12 A8.5 8.5 0 0 1 12 3.5" stroke="#d8d8d8" stroke-width="1" fill="none"/><path d="M6 12 A6 6 0 0 1 12 6" stroke="#e8e8e8" stroke-width="1" fill="none"/><circle cx="11" cy="11" r="1.5" fill="#fff"/></svg>
<svg style="left:1878px;top:1051px" width="28" height="28" viewBox="0 0 28 28" ><path d="M1.5 2 L17.5 2 L17.5 14 L9 14 L5 18 L5 14 L1.5 14 Z" fill="#f2f2f2"/><path d="M4 5.5 L15 5.5 M4 8 L15 8 M4 10.5 L12 10.5" stroke="#555" stroke-width="1"/><circle cx="16" cy="18" r="7.5" fill="#2a2424" stroke="#aaa" stroke-width="1"/><text x="16" y="22" font-family="Liberation Sans" font-size="11" fill="#fff" text-anchor="middle">5</text></svg>
<div class="t" style="left:40.40px;top:10.00px;font-size:12px;line-height:12px;letter-spacing:-0.059px;color:#dedede;">MCreator</div>
<div class="t" style="left:106.30px;top:10.00px;font-size:12px;line-height:12px;letter-spacing:-0.367px;color:#dedede;">Файл</div>
<div class="t" style="left:151.50px;top:10.00px;font-size:12px;line-height:12px;letter-spacing:-0.106px;color:#dedede;">Проект</div>
<div class="t" style="left:207.50px;top:10.00px;font-size:12px;line-height:12px;letter-spacing:-0.032px;color:#dedede;">Ресурсы</div>
<div class="t" style="left:270.60px;top:10.00px;font-size:12px;line-height:12px;letter-spacing:-0.113px;color:#dedede;">Сборка и запуск</div>
<div class="t" style="left:376.00px;top:10.00px;font-size:12px;line-height:12px;letter-spacing:0.180px;color:#dedede;">Инструменты</div>
<div class="t" style="left:469.00px;top:10.00px;font-size:12px;line-height:12px;letter-spacing:-0.070px;color:#dedede;">Окно</div>
<div class="t" style="left:513.00px;top:10.00px;font-size:12px;line-height:12px;letter-spacing:-0.233px;color:#dedede;">Справка</div>
<div class="t" style="left:775.60px;top:10.00px;font-size:12px;line-height:12px;letter-spacing:-0.132px;color:#cfcfcf;">Mcreator And BlockBench Guide - Item1 (Предмет) - MCreator 2024.3</div>
<div class="t" style="left:21.48px;top:67.00px;font-size:15px;line-height:15px;letter-spacing:0.000px;color:#e8e8e8;transform:scaleX(0.9207);transform-origin:0 0;">ПРОЕКТ</div>
<div class="t" style="left:129.08px;top:67.00px;font-size:15px;line-height:15px;letter-spacing:0.000px;color:#e8e8e8;transform:scaleX(0.9246);transform-origin:0 0;">ITEM1</div>
<div class="t" style="left:1830.70px;top:67.00px;font-size:15px;line-height:15px;letter-spacing:-0.469px;color:#e8e8e8;">КОНСОЛЬ</div>
<div class="t" style="left:53.40px;top:105.00px;font-size:12px;line-height:12px;letter-spacing:-0.065px;color:#e6e6e6;">Предпросмотр кода элемента</div>
<div class="t" style="left:306.25px;top:105.00px;font-size:12px;line-height:12px;letter-spacing:-0.325px;color:#e6e6e6;">Справка</div>
<div class="t" style="left:1468.00px;top:105.00px;font-size:12px;line-height:12px;letter-spacing:-0.020px;color:#e6e6e6;">Сохранить и оставить открытым</div>
<div class="t" style="left:1735.00px;top:105.00px;font-size:12px;line-height:12px;letter-spacing:-0.140px;color:#1c1c1c;">Сохранить элемент мода</div>
<div class="t" style="left:492.50px;top:268.00px;font-size:12px;line-height:12px;letter-spacing:-0.094px;color:#f4f4f4;">Имя в игре:</div>
<div class="t" style="left:492.50px;top:307.00px;font-size:12px;line-height:12px;letter-spacing:0.000px;color:#f4f4f4;transform:scaleX(0.9479);transform-origin:0 0;">Редкость:</div>
<div class="t" style="left:492.50px;top:346.00px;font-size:12px;line-height:12px;letter-spacing:-0.020px;color:#f4f4f4;">Вкладки в творческом меню:</div>
<div class="t" style="left:492.50px;top:385.00px;font-size:12px;line-height:12px;letter-spacing:0.059px;color:#f4f4f4;">Наибольший размер стопки:</div>
<div class="t" style="left:492.50px;top:424.00px;font-size:12px;line-height:12px;letter-spacing:-0.137px;color:#f4f4f4;">Зачаровываемость:</div>
<div class="t" style="left:492.50px;top:463.00px;font-size:12px;line-height:12px;letter-spacing:-0.072px;color:#f4f4f4;">Скорость разрушения предмета:</div>
<div class="t" style="left:492.50px;top:502.00px;font-size:12px;line-height:12px;letter-spacing:0.016px;color:#f4f4f4;">Урон от атаки (отметьте, чтобы включить):</div>
<div class="t" style="left:492.50px;top:541.00px;font-size:12px;line-height:12px;letter-spacing:0.043px;color:#f4f4f4;">Число использований предмета/прочность (оставьте 0, чтобы отключить урон):</div>
<div class="t" style="left:492.50px;top:557.00px;font-size:8px;line-height:8px;letter-spacing:-0.024px;color:#cfcfcf;">Инструменты рекомендуется создавать как элементы мода типа "Инструмент"</div>
<div class="t" style="left:492.50px;top:580.00px;font-size:12px;line-height:12px;letter-spacing:0.034px;color:#f4f4f4;">Предмет невосприимчив к огню?</div>
<div class="t" style="left:492.50px;top:619.00px;font-size:12px;line-height:12px;letter-spacing:0.069px;color:#f4f4f4;">Может разрушить любой блок?</div>
<div class="t" style="left:492.50px;top:658.00px;font-size:12px;line-height:12px;letter-spacing:-0.288px;color:#f4f4f4;">Остаётся в сетке крафта после рецепта?</div>
<div class="t" style="left:492.50px;top:697.00px;font-size:12px;line-height:12px;letter-spacing:-0.084px;color:#f4f4f4;">Наносить урон предмету вместо создания</div>
<div class="t" style="left:492.50px;top:714.00px;font-size:8px;line-height:8px;letter-spacing:-0.041px;color:#cfcfcf;">Убедитесь что предмет "Остаётся в сетке крафта после рецепта" и что он может получать урон</div>
<div class="t" style="left:492.50px;top:736.00px;font-size:12px;line-height:12px;letter-spacing:-0.164px;color:#f4f4f4;">Остаток после рецепта</div>
<div class="t" style="left:492.50px;top:753.00px;font-size:8px;line-height:8px;letter-spacing:-0.118px;color:#cfcfcf;">Убедитесь, что предмет "Остаётся в сетке крафта после рецепта". Если не указан, оставаться будет сам предмет.</div>
<div class="t" style="left:492.50px;top:775.00px;font-size:12px;line-height:12px;letter-spacing:-0.136px;color:#f4f4f4;">Анимация предмета:</div>
<div class="t" style="left:492.50px;top:814.00px;font-size:12px;line-height:12px;letter-spacing:-0.107px;color:#f4f4f4;">Длительность использования предмета:</div>
<div class="t" style="left:492.50px;top:830.00px;font-size:8px;line-height:8px;letter-spacing:-0.032px;color:#cfcfcf;">Используйте неотрицательное значение для предмета-еды</div>
<div class="t" style="left:970.70px;top:272.00px;font-size:15px;line-height:15px;letter-spacing:0.172px;color:#eaeaea;">Item 1</div>
<div class="t" style="left:971.70px;top:312.00px;font-size:12px;line-height:12px;letter-spacing:-0.064px;color:#eaeaea;">Обычная</div>
<div class="t" style="left:1397.80px;top:390.00px;font-size:12px;line-height:12px;letter-spacing:0.000px;color:#eaeaea;transform:scaleX(0.9215);transform-origin:0 0;">64</div>
<div class="t" style="left:1403.70px;top:429.00px;font-size:12px;line-height:12px;letter-spacing:0.000px;color:#eaeaea;">0</div>
<div class="t" style="left:1404.90px;top:468.00px;font-size:12px;line-height:12px;letter-spacing:0.000px;color:#eaeaea;">1</div>
<div class="t" style="left:1403.70px;top:507.00px;font-size:12px;line-height:12px;letter-spacing:0.000px;color:#eaeaea;">0</div>
<div class="t" style="left:1403.70px;top:546.00px;font-size:12px;line-height:12px;letter-spacing:0.000px;color:#eaeaea;">0</div>
<div class="t" style="left:985.50px;top:585.00px;font-size:12px;line-height:12px;letter-spacing:-0.087px;color:#eaeaea;">Отметьте для включения</div>
<div class="t" style="left:985.50px;top:624.00px;font-size:12px;line-height:12px;letter-spacing:-0.087px;color:#eaeaea;">Отметьте для включения</div>
<div class="t" style="left:985.50px;top:663.00px;font-size:12px;line-height:12px;letter-spacing:-0.087px;color:#eaeaea;">Отметьте для включения</div>
<div class="t" style="left:985.50px;top:702.00px;font-size:12px;line-height:12px;letter-spacing:-0.087px;color:#eaeaea;">Отметьте для включения</div>
<div class="t" style="left:971.40px;top:780.00px;font-size:12px;line-height:12px;letter-spacing:-0.120px;color:#eaeaea;">Без анимации</div>
<div class="t" style="left:1403.70px;top:819.00px;font-size:12px;line-height:12px;letter-spacing:0.000px;color:#eaeaea;">0</div>
<div class="t" style="left:595.80px;top:991.00px;font-size:12.5px;line-height:12.5px;letter-spacing:0.218px;color:#e6e6e6;">Отображение</div>
<div class="t" style="left:711.70px;top:991.00px;font-size:12.5px;line-height:12.5px;letter-spacing:0.114px;color:#e6e6e6;">Состояния предмета</div>
<div class="t" style="left:868.30px;top:991.00px;font-size:12.5px;line-height:12.5px;letter-spacing:-0.105px;color:#8cc04e;">Свойства</div>
<div class="t" style="left:955.70px;top:991.00px;font-size:12.5px;line-height:12.5px;letter-spacing:0.202px;color:#e6e6e6;">Пищевые свойства</div>
<div class="t" style="left:1102.30px;top:991.00px;font-size:12.5px;line-height:12.5px;letter-spacing:0.147px;color:#e6e6e6;">Расширенные свойства</div>
<div class="t" style="left:1277.50px;top:991.00px;font-size:12.5px;line-height:12.5px;letter-spacing:0.226px;color:#e6e6e6;">Триггеры</div>
<div class="t" style="left:69.30px;top:1024.00px;font-size:12px;line-height:12px;letter-spacing:-0.214px;color:#c8c8c8;">Проект сохранён в 21:26</div>
<div class="t" style="left:1802.60px;top:1024.00px;font-size:12px;line-height:12px;letter-spacing:-0.234px;color:#c8c8c8;">Gradle неактивно</div>
<div class="t" style="left:87.80px;top:1053.00px;font-size:15px;line-height:15px;letter-spacing:0.349px;color:#2a2a2a;">Поиск</div>
<div class="t" style="left:1771.00px;top:1054.00px;font-size:12px;line-height:12px;letter-spacing:0.000px;color:#f2f2f2;transform:scaleX(0.8921);transform-origin:0 0;">ENG</div>
<div class="t" style="left:1820.00px;top:1045.00px;font-size:12px;line-height:12px;letter-spacing:0.000px;color:#f2f2f2;transform:scaleX(0.8895);transform-origin:0 0;">21:29</div>
<div class="t" style="left:1807.00px;top:1063.00px;font-size:12px;line-height:12px;letter-spacing:0.000px;color:#f2f2f2;transform:scaleX(0.8943);transform-origin:0 0;">25.12.2024</div>
</body></html>
